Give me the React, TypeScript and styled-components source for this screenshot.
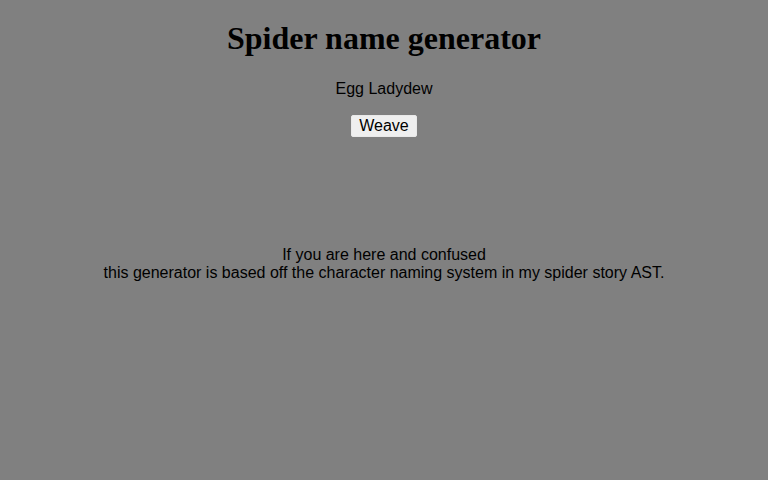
import React from 'react';
import styled, { createGlobalStyle } from 'styled-components';

const GlobalStyle = createGlobalStyle`
  body {
    margin: 0;
    background-color: #808080;
    color: #000;
    font-family: "Liberation Sans", Arial, sans-serif;
    font-size: 16px;
  }
`;

const Page = styled.main`
  display: flex;
  flex-direction: column;
  align-items: center;
  padding: 0 8px;
  text-align: center;
`;

const Title = styled.h1`
  font-family: "Liberation Serif", "Times New Roman", serif;
  font-size: 32px;
  font-weight: bold;
  margin: 20px 0 23px;
`;

const Name = styled.p`
  margin: 0 0 17px;
  line-height: 18px;
`;

const WeaveButton = styled.button`
  font-family: "Liberation Sans", Arial, sans-serif;
  font-size: 16px;
  line-height: 18px;
  padding: 1px 7px;
  background: #efefef;
  border: 1px solid #e9e9e9;
  border-radius: 2px;
  color: #000;
  cursor: pointer;
`;

const Note = styled.p`
  margin: 109px 0 0;
  line-height: 18px;
`;

const names = ['Egg Ladydew', 'Silk Moonweb', 'Thread Duskleg', 'Egg Dewspinner'];

const App: React.FC = () => {
  const [name, setName] = React.useState(names[0]);

  const weave = () => {
    setName(names[Math.floor(Math.random() * names.length)]);
  };

  return (
    <>
      <GlobalStyle />
      <Page>
        <Title>Spider name generator</Title>
        <Name>{name}</Name>
        <WeaveButton onClick={weave}>Weave</WeaveButton>
        <Note>
          If you are here and confused
          <br />
          this generator is based off the character naming system in my spider story AST.
        </Note>
      </Page>
    </>
  );
};

export default App;
